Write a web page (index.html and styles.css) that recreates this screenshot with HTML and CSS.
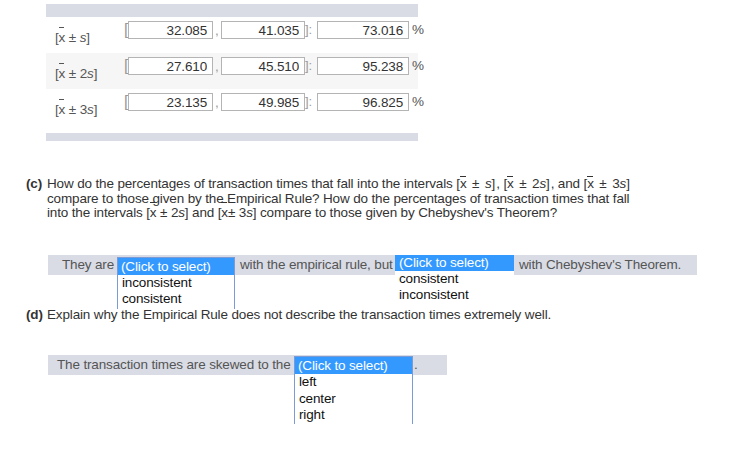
FILE: index.html
```html
<!DOCTYPE html>
<html>
<head>
<meta charset="utf-8">
<link rel="stylesheet" href="styles.css">
</head>
<body>
<div class="table">
  <div class="bar-top"></div>
  <div class="row">
    <div class="label">[<span class="xbar">x</span> ± <i>s</i>]</div>
    <span class="brk open">[</span><input class="num w1" value="32.085" readonly><span class="sep comma">,</span><input class="num w2" value="41.035" readonly><span class="sep close">]:</span><input class="num w3" value="73.016" readonly><span class="pct">%</span>
  </div>
  <div class="row alt">
    <div class="label">[<span class="xbar">x</span> ± 2<i>s</i>]</div>
    <span class="brk open">[</span><input class="num w1" value="27.610" readonly><span class="sep comma">,</span><input class="num w2" value="45.510" readonly><span class="sep close">]:</span><input class="num w3" value="95.238" readonly><span class="pct">%</span>
  </div>
  <div class="row">
    <div class="label">[<span class="xbar">x</span> ± 3<i>s</i>]</div>
    <span class="brk open">[</span><input class="num w1" value="23.135" readonly><span class="sep comma">,</span><input class="num w2" value="49.985" readonly><span class="sep close">]:</span><input class="num w3" value="96.825" readonly><span class="pct">%</span>
  </div>
  <div class="bar-bottom"></div>
</div>

<div class="question q-c">
  <span class="q-label">(c)</span>
  <div class="q-text">How do the percentages of transaction times that fall into the intervals <span class="math">[<span class="xbar">x</span> ± <i>s</i>]</span>, <span class="math">[<span class="xbar">x</span> ± 2<i>s</i>]</span>, and <span class="math">[<span class="xbar">x</span> ± 3<i>s</i>]</span><br>compare to those given by the Empirical Rule? How do the percentages of transaction times that fall<br>into the intervals [<span class="xbar hi">x</span> ± 2<i>s</i>] and [<span class="xbar hi">x</span>± 3<i>s</i>] compare to those given by Chebyshev's Theorem?</div>
</div>

<div class="answer-bar bar-c">
  <span class="lead-c">They are</span>
  <div class="dropdown dd1 bordered">
    <div class="dd-head">(Click to select)</div>
    <div class="dd-list">
      <div>inconsistent</div>
      <div>consistent</div>
    </div>
  </div>
  <span class="mid">with the empirical rule, but</span>
  <div class="dropdown dd2">
    <div class="dd-head">(Click to select)</div>
    <div class="dd-list">
      <div>consistent</div>
      <div>inconsistent</div>
    </div>
  </div>
  <span class="tail">with Chebyshev's Theorem.</span>
</div>

<div class="question q-d">
  <span class="q-label">(d)</span>
  <div class="q-text">Explain why the Empirical Rule does not describe the transaction times extremely well.</div>
</div>

<div class="answer-bar bar-d">
  <span class="lead-d">The transaction times are skewed to the</span>
  <div class="dropdown dd3 bordered">
    <div class="dd-head">(Click to select)</div>
    <div class="dd-list">
      <div>left</div>
      <div>center</div>
      <div>right</div>
    </div>
  </div>
  <span class="dot">.</span>
</div>
</body>
</html>
```

FILE: styles.css
```css
html, body {
  margin: 0;
  padding: 0;
  background: #ffffff;
}
body {
  font-family: "Liberation Sans", Arial, sans-serif;
  font-size: 13.5px;
  letter-spacing: -0.15px;
  color: #333333;
  width: 741px;
  height: 450px;
  overflow: hidden;
}
*, *::before, *::after {
  box-sizing: border-box;
}

/* ---------- table ---------- */
.table {
  margin: 4px 0 0 46px;
  width: 372px;
}
.bar-top {
  height: 13px;
  background: #d9dce5;
}
.bar-bottom {
  height: 8px;
  margin-top: 8px;
  background: #d9dce5;
}
.row {
  display: flex;
  align-items: flex-start;
  height: 36px;
  color: #555555;
}
.row.alt {
  background: #f6f6f6;
}
.label {
  width: 78px;
  padding-left: 9px;
  padding-top: 13px;
  line-height: 15px;
  flex: none;
}
.xbar {
  position: relative;
}
.xbar::before {
  content: "";
  position: absolute;
  left: 0;
  right: 1px;
  top: -3px;
  border-top: 1px solid currentColor;
}
.q-text .xbar::before {
  top: 0;
}
.q-text .xbar.hi::before {
  top: -3px;
}
.math {
  word-spacing: 2px;
  margin-right: 1px;
}
.brk, .sep {
  flex: none;
  margin-top: 4px;
  height: 18px;
  line-height: 18px;
  color: #9a9a9a;
}
.brk.open {
  width: 4px;
  font-size: 16px;
  font-weight: 300;
}
.sep.comma {
  width: 8px;
  padding-left: 2px;
  line-height: 20px;
}
.sep.close {
  width: 12px;
  font-size: 13px;
}
.num {
  flex: none;
  height: 18px;
  margin: 4px 0 0 0;
  padding: 0 5px 0 0;
  border: 1px solid #b4b4b4;
  background: #ffffff;
  font-family: "Liberation Sans", Arial, sans-serif;
  font-size: 13.5px;
  letter-spacing: -0.15px;
  color: #333333;
  text-align: right;
  outline: none;
}
.w1 { width: 85px; }
.w2 { width: 84px; }
.w3 { width: 92px; }
.pct {
  margin-top: 5px;
  padding-left: 3px;
  line-height: 15px;
}

/* ---------- questions ---------- */
.question {
  display: flex;
  margin-left: 26px;
  line-height: 14.5px;
  color: #333333;
}
.q-label {
  flex: none;
  width: 21px;
  font-weight: bold;
}
.q-text {
  white-space: nowrap;
}
.q-c {
  margin-top: 36px;
}
.q-d {
  margin-top: 33px;
}

/* ---------- answer bars ---------- */
.answer-bar {
  display: flex;
  align-items: flex-start;
  margin-left: 48px;
  height: 20px;
  background: #d9dce5;
  color: #555555;
  line-height: 20px;
  white-space: nowrap;
}
.bar-c {
  width: 649px;
  margin-top: 34px;
}
.bar-d {
  width: 399px;
  margin-top: 33px;
}
.lead-c {
  padding-left: 14px;
  width: 69px;
  flex: none;
}
.mid {
  padding-left: 5px;
  width: 160px;
  flex: none;
}
.tail {
  padding-left: 5px;
}
.lead-d {
  padding-left: 9px;
  width: 246px;
  flex: none;
}
.dot {
  padding-left: 1px;
}

.dropdown {
  position: relative;
  flex: none;
}
.dropdown.bordered {
  border: 1px solid #7b9bd6;
  border-bottom: none;
}
.dd-head {
  height: 17px;
  line-height: 17px;
  background: #3399ff;
  color: #ffffff;
  padding-left: 3px;
  white-space: nowrap;
}
.dd-list {
  position: absolute;
  top: 100%;
  left: 0;
  right: 0;
  background: #ffffff;
  color: #111111;
  padding-left: 3px;
  line-height: 16px;
}
.bordered .dd-list {
  left: -1px;
  right: -1px;
  border-left: 1px solid #7b9bd6;
  border-right: 1px solid #7b9bd6;
}
.dd1 {
  width: 118px;
  margin-top: 2px;
}
.dd1 .dd-list {
  height: 34px;
  padding-left: 4px;
}
.dd2 {
  width: 119px;
}
.dd2 .dd-head,
.dd2 .dd-list {
  padding-left: 4px;
}
.dd2 .dd-head {
  height: 16px;
  line-height: 16px;
}
.dd3 {
  width: 119px;
  margin-top: 1px;
}
.dd3 .dd-list {
  padding-left: 4px;
  line-height: 16.5px;
}
```
